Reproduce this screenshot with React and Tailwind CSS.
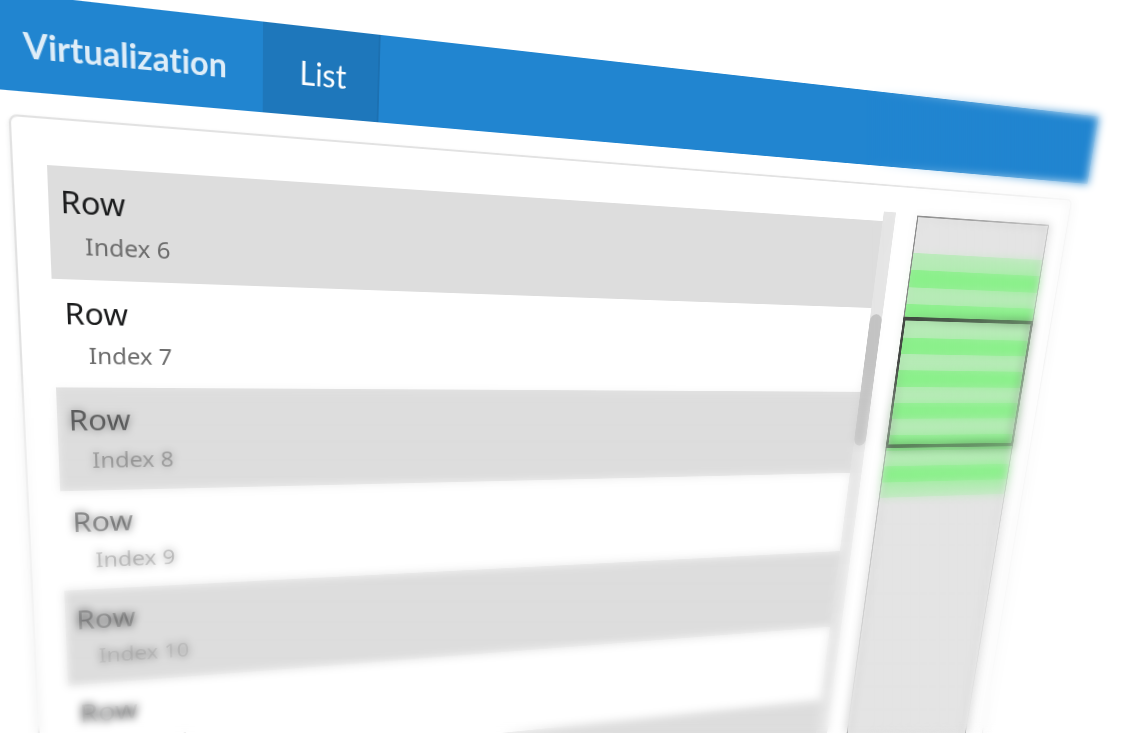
const ROWS = [6, 7, 8, 9, 10, 11, 12];
const STRIPES = 15;

export default function App() {
  return (
    <div className="relative h-screen overflow-hidden bg-white font-['Noto_Sans',sans-serif]">
      {/* Tilted plane */}
      <div className="w-[calc(100%+248px)] origin-top-left shadow-[0_0_4px_white] [transform:matrix3d(1.1003,0.1225,0,0.0003008,0.05179,1.07411,0,0.0002098,0,0,1,0,-23.85,-10.62,0,0.94991)]">
        <Menu />
        <main className="py-[22px] pr-[22px] pl-6">
          <div className="flex gap-[34px] rounded-lg border-2 border-[#e2e2e2] bg-white px-[31px] py-8 shadow-[0_2px_4px_rgba(34,36,38,0.1)]">
            <VirtualList />
            <MiniMap />
          </div>
        </main>
      </div>

      {/* Depth of field */}
      <div className="pointer-events-none absolute inset-0 backdrop-blur-[4px] [mask-image:linear-gradient(to_bottom,transparent_49%,rgba(0,0,0,0.5)_57%,rgba(0,0,0,0.72)_75%,black_100%)]" />
      <div className="pointer-events-none absolute inset-0 backdrop-blur-[4px] [mask-image:linear-gradient(to_right,transparent_76%,rgba(0,0,0,0.4)_85%,black_97%)]" />
    </div>
  );
}

function Menu() {
  return (
    <nav className="flex h-[89px] items-stretch bg-[#2185d0] pt-[2px] font-[Lato,sans-serif] text-[32px] leading-10 [font-variant-ligatures:none]">
      <a href="#home" className="flex items-center pr-9 pl-10 font-bold text-white/85">
        Virtualization
      </a>
      <a
        href="#list"
        aria-current="page"
        className="-mt-[2px] flex items-center border-r-2 border-black/5 bg-[#1e77bb] pt-[2px] pr-[34px] pl-[38px] text-white"
      >
        List
      </a>
    </nav>
  );
}

function VirtualList() {
  return (
    <div className="flex h-[877px] flex-1 overflow-hidden">
      <ul className="flex-1 pt-3">
        {ROWS.map((index) => (
          <li
            key={index}
            className={`flex h-[112px] flex-col gap-2 pt-[14px] pl-[11px] ${
              index % 2 === 0 ? "bg-[#dddddd]" : "bg-white"
            }`}
          >
            <h4 className="text-[31px] leading-10 text-[#1b1c1d]">Row</h4>
            <p className="pl-[22px] text-[24px] leading-8 text-[#6b6b6b]">Index {index}</p>
          </li>
        ))}
      </ul>
      {/* Scrollbar */}
      <div className="w-[19px] bg-[#e5e5e5] pt-[132px]">
        <div className="h-[178px] rounded-full bg-[#c3c3c3]" />
      </div>
    </div>
  );
}

/** Overview of the rendered rows, with a frame around the visible ones */
function MiniMap() {
  return (
    <div className="relative mt-[2px] w-[221px] border-2 border-[#777777] bg-[#e4e4e4] pt-[46px]">
      <div className="flex h-[335px] flex-col">
        {Array.from({ length: STRIPES }, (_, i) => (
          <div key={i} className={`flex-1 ${i % 2 === 0 ? "bg-[#b7ebb7]" : "bg-[#8bf08b]"}`} />
        ))}
      </div>
      <div className="absolute inset-x-0 top-[130px] -mx-[2px] h-[180px] border-[5px] border-x-4 border-[#333333]" />
    </div>
  );
}
